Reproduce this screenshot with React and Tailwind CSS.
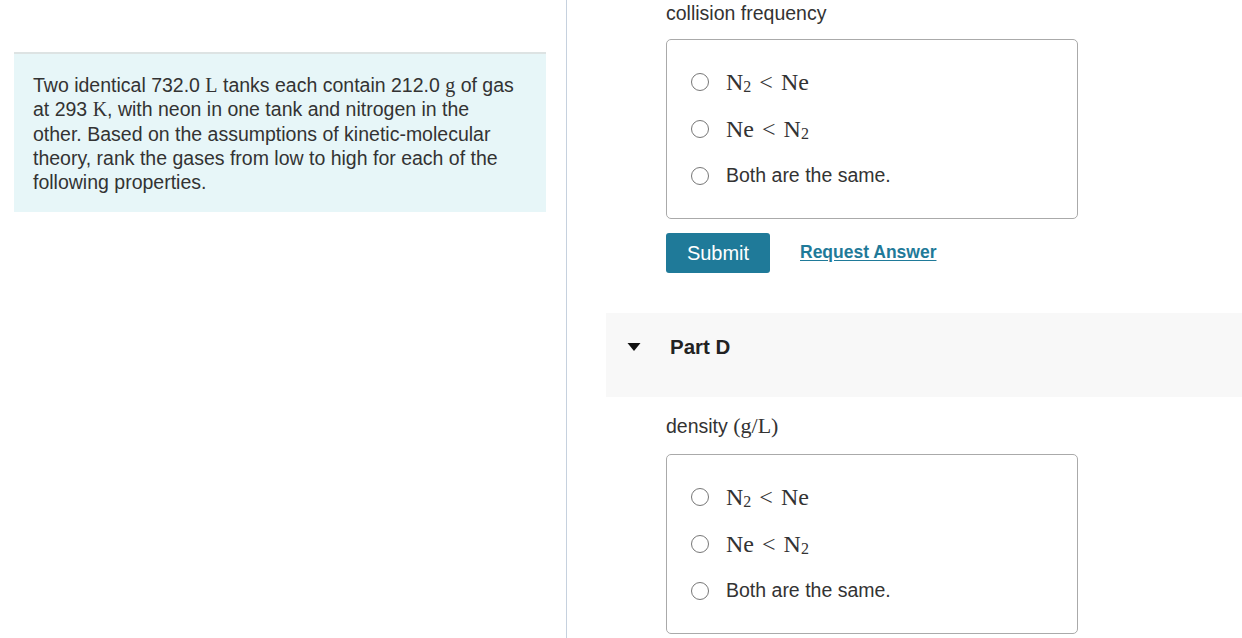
function M({ children, size = "text-[20px]" }) {
  return <span className={`font-['Liberation_Serif','DejaVu_Serif',serif] ${size}`}>{children}</span>;
}

function N2() {
  return (
    <>
      N<sub className="text-[16px] relative top-[2px] align-baseline">2</sub>
    </>
  );
}

function Lt() {
  return <span className="mx-[8px]">&lt;</span>;
}

function Radio({ children }) {
  return (
    <label className="flex items-center h-[47px]">
      <span className="w-[18px] h-[18px] rounded-full border-[1.5px] border-[#777] bg-white mr-[17px] shrink-0" />
      <span className="text-[19.5px] text-[#333]">{children}</span>
    </label>
  );
}

function Options() {
  return (
    <div className="w-[412px] h-[180px] border border-[#aaa] rounded-[5px] flex flex-col justify-center pl-[24px]">
      <Radio>
        <M size="text-[24px]">
          <N2 />
          <Lt />
          Ne
        </M>
      </Radio>
      <Radio>
        <M size="text-[24px]">
          Ne
          <Lt />
          <N2 />
        </M>
      </Radio>
      <Radio>Both are the same.</Radio>
    </div>
  );
}

export default function App() {
  return (
    <div className="w-[1242px] h-[638px] overflow-hidden flex bg-white text-[#333] font-['Liberation_Sans',Arial,sans-serif]">
      <div className="w-[567px] shrink-0 border-r border-[#c6d1de] pt-[52px] pl-[14px] pr-[20px]">
        <div className="h-[160px] bg-[#e7f6f8] border-t-2 border-[#dde3e3] pl-[19px] pr-[28px] pt-[19px] text-[19.5px] leading-[24.3px]">
          Two identical 732.0 <M>L</M> tanks each contain 212.0 <M>g</M> of gas at 293 <M>K</M>, with neon in one tank
          and nitrogen in the other. Based on the assumptions of kinetic-molecular theory, rank the gases from low to high
          for each of the following properties.
        </div>
      </div>

      <div className="flex-1 pl-[39px]">
        <div className="pl-[60px]">
          <div className="text-[19.5px] leading-[22px] pt-[2px]">collision frequency</div>
          <div className="mt-[15px]">
            <Options />
          </div>
          <div className="flex items-center mt-[14px]">
            <button className="w-[104px] h-[40px] bg-[#1f7a99] rounded-[3px] text-white text-[20px]">Submit</button>
            <a href="#" className="ml-[30px] text-[#1f7a99] font-bold text-[17.5px] underline underline-offset-2 -mt-[2px]">
              Request Answer
            </a>
          </div>
        </div>

        <div className="mt-[40px] h-[84px] bg-[#f8f8f8] flex items-start pt-[19px]">
          <svg width="14" height="10" viewBox="0 0 14 10" className="ml-[21px] mt-[10px]">
            <path d="M0.5 1 L13.5 1 L7 9 Z" fill="#111" />
          </svg>
          <span className="ml-[29px] font-bold text-[20.5px] text-[#222]">Part D</span>
        </div>

        <div className="pl-[60px]">
          <div className="mt-[16px] text-[19.5px] leading-[26px]">
            density <M size="text-[22px]">(g/L)</M>
          </div>
          <div className="mt-[15px]">
            <Options />
          </div>
        </div>
      </div>
    </div>
  );
}
